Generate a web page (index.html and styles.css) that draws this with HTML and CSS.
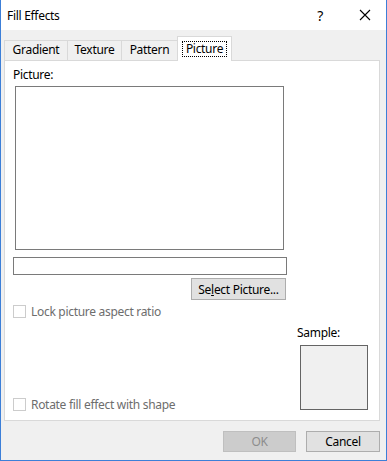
FILE: index.html
```html
<!DOCTYPE html>
<html>
<head>
<meta charset="utf-8">
<link rel="stylesheet" href="styles.css">
</head>
<body>
<div class="dialog">
  <div class="titlebar">
    <span class="title">Fill Effects</span>
    <span class="help">?</span>
    <svg class="close" width="12" height="12" viewBox="0 0 12 12"><path d="M1 1 L11 11 M11 1 L1 11" stroke="#000" stroke-width="1.1" fill="none"/></svg>
  </div>
  <div class="client">
    <div class="tabs">
      <div class="tab t-grad">Gradient</div>
      <div class="tab t-tex">Texture</div>
      <div class="tab t-pat">Pattern</div>
      <div class="tab active"><span class="focus">Picture</span></div>
    </div>
    <div class="panel">
      <div class="label">Picture:</div>
      <div class="picbox"></div>
      <div class="field"></div>
      <div class="btnrow"><div class="btn select">Se<u>l</u>ect Picture...</div></div>
      <div class="check disabled"><span class="box"></span><span>Lock picture aspect ratio</span></div>
      <div class="bottom">
        <div class="check disabled rotate"><span class="box"></span><span>Rotate fill effect with shape</span></div>
        <div class="sample">
          <div class="slabel">Sample:</div>
          <div class="sbox"></div>
        </div>
      </div>
    </div>
    <div class="actions">
      <div class="btn ok">OK</div>
      <div class="btn cancel">Cancel</div>
    </div>
  </div>
</div>
</body>
</html>
```
FILE: styles.css
```css
* { box-sizing: border-box; }
html, body { margin: 0; padding: 0; }
body {
  font-family: "Noto Sans", "Open Sans", sans-serif;
  font-size: 12px;
  letter-spacing: -0.3px;
  color: #000;
  background: #fff;
}
.dialog {
  width: 387px;
  height: 461px;
  border: 1px solid #3c7fd8;
  border-top: none;
  display: flex;
  flex-direction: column;
  background: #f0f0f0;
}
.titlebar {
  height: 30px;
  background: #fff;
  display: flex;
  align-items: center;
  padding-left: 6px;
  flex-shrink: 0;
}
.title { font-size: 12px; flex: 1; }
.help { font-size: 14px; margin-right: 36px; }
.close { margin-right: 15px; }
.client {
  flex: 1;
  display: flex;
  flex-direction: column;
  padding: 6px 6px 0 3px;
}
.tabs {
  display: flex;
  align-items: flex-end;
  height: 24px;
  position: relative;
  z-index: 1;
}
.tab {
  height: 20px;
  border: 1px solid #d9d9d9;
  border-bottom: none;
  border-right: none;
  background: #f0f0f0;
  line-height: 18px;
  text-align: center;
  padding: 0;
}
.t-grad { width: 63px; }
.t-tex { width: 54px; }
.t-pat { width: 56px; }
.tab.active {
  width: 55px;
  background: #fff;
  border: 1px solid #d9d9d9;
  border-bottom: none;
  margin-bottom: -1px;
  height: 25px;
  padding: 4px 0 0 0;
  line-height: 14px;
}
.focus {
  display: inline-block;
  border: 1px dotted #000;
  padding: 0 3px;
  line-height: 14px;
}
.panel {
  height: 361px;
  background: #fff;
  border: 1px solid #d9d9d9;
  display: flex;
  flex-direction: column;
  padding: 6px 0 9px 8px;
}
.label { line-height: 16px; }
.picbox {
  margin: 3px 0 0 2px;
  width: 269px;
  height: 164px;
  border: 1px solid #7a7a7a;
}
.field {
  margin-top: 7px;
  width: 274px;
  height: 18px;
  border: 1px solid #7a7a7a;
}
.btnrow {
  width: 274px;
  display: flex;
  justify-content: flex-end;
  margin-top: 3px;
}
.btn {
  height: 22px;
  border: 1px solid #adadad;
  background: #e1e1e1;
  display: flex;
  align-items: center;
  justify-content: center;
}
.select { width: 95px; margin-right: 1px; }
.check {
  display: flex;
  align-items: center;
  gap: 5px;
  height: 13px;
  margin-top: 5px;
}
.check .box {
  width: 13px;
  height: 13px;
  border: 1px solid #cccccc;
  background: #fff;
}
.disabled { color: #6d6d6d; }
.bottom {
  flex: 1;
  display: flex;
  justify-content: space-between;
  align-items: flex-end;
}
.sample {
  margin-right: 11px;
  margin-bottom: 1px;
}
.slabel { line-height: 16px; margin-bottom: 4px; }
.sbox {
  margin-left: 3px;
  width: 68px;
  height: 65px;
  border: 1px solid #646464;
  background: #f0f0f0;
}
.actions {
  display: flex;
  justify-content: flex-end;
  gap: 10px;
  margin-top: 10px;
}
.ok { width: 73px; height: 21px; background: #cccccc; border-color: #bfbfbf; color: #8d8d8d; }
.cancel { width: 74px; height: 21px; }
```
